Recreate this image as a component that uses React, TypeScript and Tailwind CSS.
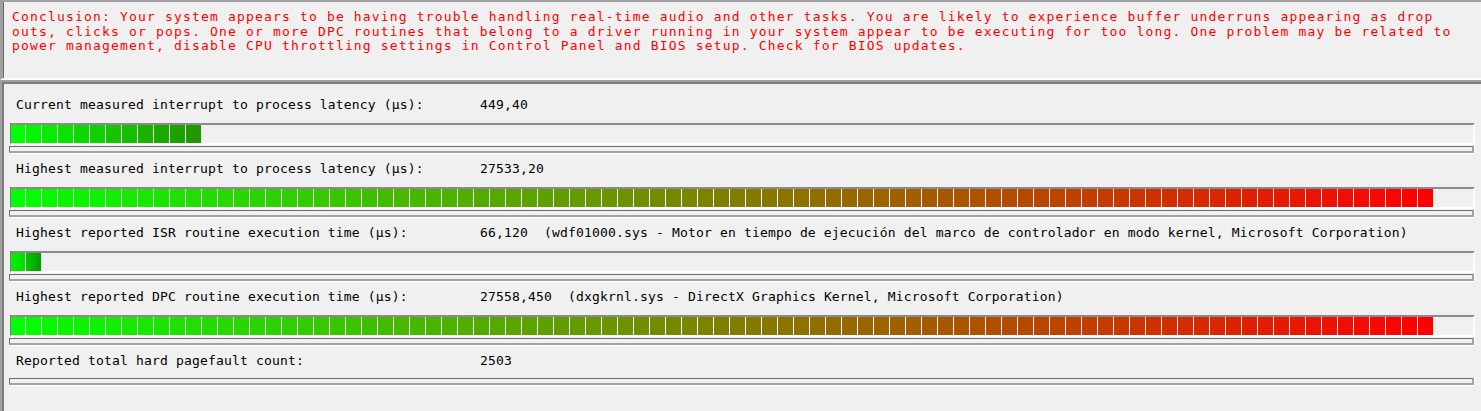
const mono = "font-['DejaVu_Sans_Mono',monospace]";

type Row = {
  label: string;
  value: string;
  desc?: string;
  colors?: string[];
};

function ramp(count: number, total: number) {
  const out: string[] = [];
  for (let i = 0; i < count; i++) {
    const t = i / (total - 1);
    const r = Math.round(255 * t);
    const g = Math.round(255 * (1 - t));
    out.push(`rgb(${r},${g},0)`);
  }
  return out;
}

const currentColors = Array.from({ length: 12 }, (_, i) => {
  const r = Math.round((34 * i) / 11);
  const g = Math.round(255 - (104 * i) / 11);
  return `rgb(${r},${g},0)`;
});

const rows: Row[] = [
  {
    label: "Current measured interrupt to process latency (µs):",
    value: "449,40",
    colors: currentColors,
  },
  {
    label: "Highest measured interrupt to process latency (µs):",
    value: "27533,20",
    colors: ramp(89, 89),
  },
  {
    label: "Highest reported ISR routine execution time (µs):",
    value: "66,120",
    desc: "(wdf01000.sys - Motor en tiempo de ejecución del marco de controlador en modo kernel, Microsoft Corporation)",
    colors: ["linear-gradient(90deg,#00f400,#00dc00)", "linear-gradient(90deg,#00c800,#009a00)"],
  },
  {
    label: "Highest reported DPC routine execution time (µs):",
    value: "27558,450",
    desc: "(dxgkrnl.sys - DirectX Graphics Kernel, Microsoft Corporation)",
    colors: ramp(89, 89),
  },
  {
    label: "Reported total hard pagefault count:",
    value: "2503",
  },
];

function ThinBox({ className = "" }: { className?: string }) {
  return (
    <div className={`-ml-px border-b border-r border-white ${className}`}>
      <div className="h-[7px] border-t border-l border-[#6e6e6e] border-b-2 border-r-2 border-b-[#a3a3a3] border-r-[#a3a3a3]" />
    </div>
  );
}

function Bar({ colors }: { colors: string[] }) {
  return (
    <div className="mt-[10px] h-[22px] border-t-2 border-l border-t-[#8a8a8a] border-l-[#7a7a7a] border-b-2 border-r-2 border-b-white border-r-white">
      <div className="flex h-full">
        <div className="flex h-full gap-px bg-white">
          {colors.map((c, i) => (
            <div
              key={i}
              className={`h-full ${i === 0 ? "w-[14px]" : "w-[15px]"}`}
              style={{ background: c }}
            />
          ))}
        </div>
      </div>
    </div>
  );
}

export default function App() {
  return (
    <div className={`w-[1481px] h-[411px] overflow-hidden bg-[#f0f0f0] ${mono}`}>
      {/* Conclusion */}
      <div className="h-[80px] border-t-2 border-l-[3px] border-[#a0a0a0] border-b-2 border-b-white shadow-[inset_1px_0_0_#6a6a6a] pl-[9px] pt-[8px] text-[13px] leading-[14.5px] tracking-[1.17px] text-[#ff0000]">
        <div className="whitespace-nowrap">
          Conclusion: Your system appears to be having trouble handling real-time audio and other tasks. You are likely to experience buffer underruns appearing as drop
        </div>
        <div className="whitespace-nowrap">
          outs, clicks or pops. One or more DPC routines that belong to a driver running in your system appear to be executing for too long. One problem may be related to
        </div>
        <div className="whitespace-nowrap">
          power management, disable CPU throttling settings in Control Panel and BIOS setup. Check for BIOS updates.
        </div>
      </div>

      {/* Measurements */}
      <div className="h-[331px] border-t-2 border-l-2 border-[#a0a0a0] shadow-[inset_2px_2px_0_#7c7c7c] pl-[8px] pr-[6px] pt-[15px] text-[13px] tracking-[0.17px] text-black">
        {rows.map((row, idx) => (
          <div key={idx} className={idx === 0 ? "" : "mt-[7px]"}>
            <div className="ml-[6px] flex h-4 items-center whitespace-nowrap leading-4">
              <span className="w-[464px]">{row.label}</span>
              <span>{row.value}</span>
              {row.desc && <span className="ml-4">{row.desc}</span>}
            </div>
            {row.colors ? (
              <>
                <Bar colors={row.colors} />
                <ThinBox className="mt-px" />
              </>
            ) : (
              <ThinBox className="mt-[9px]" />
            )}
          </div>
        ))}
      </div>
    </div>
  );
}
